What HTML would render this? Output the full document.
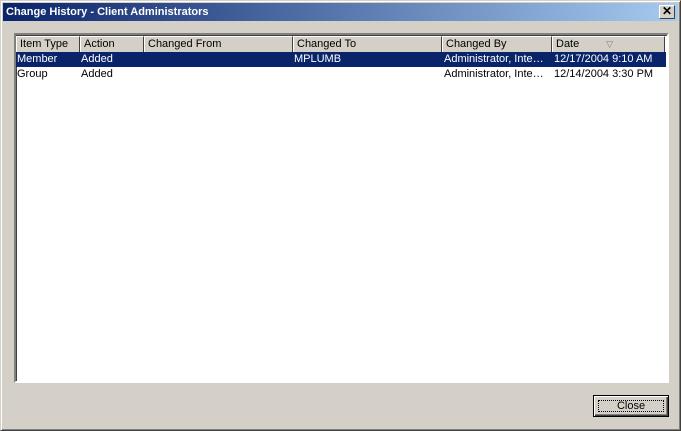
<!DOCTYPE html><html><head><style>
*{margin:0;padding:0;box-sizing:border-box}
body{width:681px;height:431px;background:#d4d0c8;font:11px Tahoma,"Liberation Sans",sans-serif;position:relative;overflow:hidden}
.win{position:absolute;left:0;top:0;width:681px;height:431px;border:1px solid;border-color:#d4d0c8 #404040 #404040 #d4d0c8;box-shadow:inset 1px 1px #fff,inset -1px -1px #808080}
.title{position:absolute;left:2px;top:2px;width:675px;height:18px;background:linear-gradient(90deg,#0a246a,#a6caf0);color:#fff;font-weight:bold;font-size:11px;line-height:18px;padding-left:3px}
.x{position:absolute;right:3px;top:2px;width:16px;height:14px;background:#d4d0c8;border:1px solid;border-color:#fff #404040 #404040 #fff;color:#000;font-size:12px;line-height:11px;text-align:center;font-weight:bold}
.lv{position:absolute;left:13px;top:32px;width:655px;height:350px;background:#fff;border:2px solid;border-color:#808080 #fff #fff #808080;box-shadow:inset 1px 1px #404040}
.h{position:absolute;top:1px;height:17px;background:#d4d0c8;border:1px solid;border-color:#fff #404040 #404040 #fff;padding-left:3px;line-height:15px;white-space:nowrap}
.r{position:absolute;left:0;width:650px;height:15px;line-height:15px}
.r span{position:absolute;white-space:nowrap}
.btn{position:absolute;left:592px;top:394px;width:76px;height:22px;border:1px solid #000;box-shadow:inset 1px 1px #fff,inset -1px -1px #404040,inset -2px -2px #808080;text-align:center;line-height:20px}
.btn i{position:absolute;left:4px;top:4px;right:4px;bottom:4px;border:1px dotted #000}
</style></head><body><div class="win">
<div class="title">Change History - Client Administrators<div class="x">✕</div></div>
<div class="lv">
<div class="h" style="left:0;width:64px">Item Type</div>
<div class="h" style="left:64px;width:64px">Action</div>
<div class="h" style="left:128px;width:149px">Changed From</div>
<div class="h" style="left:277px;width:149px">Changed To</div>
<div class="h" style="left:426px;width:110px">Changed By</div>
<div class="h" style="left:536px;width:113px">Date <span style="color:#808080;margin-left:24px;font-size:9px">▽</span></div>
<div class="r" style="top:17px;background:#0a246a;color:#fff"><span style="left:1px">Member</span><span style="left:65px">Added</span><span style="left:278px">MPLUMB</span><span style="left:428px">Administrator, Inte…</span><span style="left:538px">12/17/2004 9:10 AM</span></div>
<div class="r" style="top:32px"><span style="left:1px">Group</span><span style="left:65px">Added</span><span style="left:428px">Administrator, Inte…</span><span style="left:538px">12/14/2004 3:30 PM</span></div>
</div>
<div class="btn">Close<i></i></div>
</div></body></html>
